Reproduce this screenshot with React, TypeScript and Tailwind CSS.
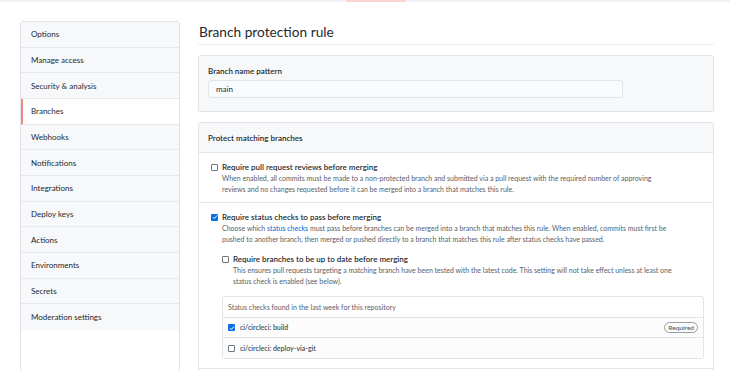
import React from "react";

const items = [
  "Options",
  "Manage access",
  "Security & analysis",
  "Branches",
  "Webhooks",
  "Notifications",
  "Integrations",
  "Deploy keys",
  "Actions",
  "Environments",
  "Secrets",
  "Moderation settings",
];

function Box({ checked }: { checked?: boolean }) {
  if (checked) {
    return (
      <span className="flex h-[7px] w-[7px] shrink-0 items-center justify-center rounded-[1px] bg-[#0b6fe0]">
        <svg viewBox="0 0 8 8" className="h-[6px] w-[6px]">
          <path d="M1.3 4.2 L3.2 6 L6.8 1.9" fill="none" stroke="white" strokeWidth="1.3" />
        </svg>
      </span>
    );
  }
  return <span className="h-[7px] w-[7px] shrink-0 rounded-[1px] border border-[#6e7681] bg-white" />;
}

export default function App() {
  return (
    <div
      className="h-[371px] w-[730px] overflow-hidden bg-white text-[#24292e]"
      style={{ fontFamily: "Lato, 'Noto Sans', sans-serif" }}
    >
      <div className="flex h-[2px] bg-[#f3f4f6]">
        <div className="w-[346px]" />
        <div className="w-[60px] bg-[#fcd3cf]" />
      </div>
      <div className="flex pl-[20px] pt-[19px]">
        <nav className="w-[160px] overflow-hidden rounded-[3px] border border-[#e1e4e8]">
          {items.map((it, i) => (
            <div
              key={it}
              className={
                "flex h-[25.67px] items-center px-[10px] text-[8px] " +
                (i < items.length - 1 ? "border-b border-[#e6e8eb] " : "") +
                (it === "Branches"
                  ? "border-l-2 border-l-[#f08c80] bg-white pl-[8px]"
                  : "bg-[#f6f8fa]")
              }
            >
              {it}
            </div>
          ))}
        </nav>
        <main className="ml-[18px] w-[516px]">
          <div className="flex h-[24px] items-center border-b border-[#eaecef] pl-[1px] pb-[1px] text-[13.7px] text-[#24292e]">
            Branch protection rule
          </div>
          <div className="mt-[10px] rounded-[3px] border border-[#e1e4e8] bg-[#f6f8fa] pl-[9px] pt-[9px] pb-[13px]">
            <div className="text-[8px] font-semibold leading-[12px]">Branch name pattern</div>
            <div className="mt-[3px] flex h-[18px] w-[415px] items-center rounded-[3px] border border-[#e1e4e8] bg-[#fafbfc] pl-[7px] text-[8px]">
              main
            </div>
          </div>
          <div className="mt-[10px] rounded-t-[3px] border-x border-t border-[#e1e4e8]">
            <div className="flex h-[30px] items-center border-b border-[#e1e4e8] bg-[#f6f8fa] pl-[9px] text-[8px] font-semibold">
              Protect matching branches
            </div>
            <div className="flex h-[50px] border-b border-[#e1e4e8] pl-[12px] pt-[8px]">
              <div className="flex h-[12px] items-center">
                <Box />
              </div>
              <div className="ml-[4px] whitespace-nowrap">
                <div className="text-[8px] font-semibold leading-[12px]">
                  Require pull request reviews before merging
                </div>
                <div className="text-[7px] leading-[11px] text-[#586069]">
                  When enabled, all commits must be made to a non-protected branch and submitted via a pull request with the required number of approving
                </div>
                <div className="text-[7px] leading-[11px] text-[#586069]">
                  reviews and no changes requested before it can be merged into a branch that matches this rule.
                </div>
              </div>
            </div>
            <div className="flex border-b border-[#e1e4e8] pl-[12px] pr-[9px] pt-[8px] pb-[9px]">
              <div className="flex h-[12px] items-center">
                <Box checked />
              </div>
              <div className="ml-[4px] flex-1 whitespace-nowrap">
                <div className="text-[8px] font-semibold leading-[12px]">
                  Require status checks to pass before merging
                </div>
                <div className="text-[7px] leading-[11px] text-[#586069]">
                  Choose which <span className="text-[#0366d6]">status checks</span> must pass before branches can be merged into a branch that matches this rule. When enabled, commits must first be
                </div>
                <div className="text-[7px] leading-[11px] text-[#586069]">
                  pushed to another branch, then merged or pushed directly to a branch that matches this rule after status checks have passed.
                </div>
                <div className="mt-[8px] flex">
                  <div className="flex h-[12px] items-center">
                    <Box />
                  </div>
                  <div className="ml-[4px]">
                    <div className="text-[8px] font-semibold leading-[12px]">
                      Require branches to be up to date before merging
                    </div>
                    <div className="text-[7px] leading-[11px] text-[#586069]">
                      This ensures pull requests targeting a matching branch have been tested with the latest code. This setting will not take effect unless at least one
                    </div>
                    <div className="text-[7px] leading-[11px] text-[#586069]">
                      status check is enabled (see below).
                    </div>
                  </div>
                </div>
                <div className="mt-[9px] rounded-[3px] border border-[#e1e4e8]">
                  <div className="flex h-[21px] items-center border-b border-[#e1e4e8] pl-[5px] text-[7px] text-[#586069]">
                    Status checks found in the last week for this repository
                  </div>
                  <div className="flex h-[20px] items-center border-b border-[#e1e4e8] bg-[#fcfcfd] pl-[5px] pr-[5px]">
                    <Box checked />
                    <span className="ml-[5px] flex-1 text-[7px] font-semibold text-[#444d56]">ci/circleci: build</span>
                    <span className="flex h-[11px] items-center rounded-full border border-[#959da5] px-[3px] text-[6.5px] font-semibold text-[#586069]">
                      Required
                    </span>
                  </div>
                  <div className="flex h-[20px] items-center bg-[#fcfcfd] pl-[5px]">
                    <Box />
                    <span className="ml-[5px] text-[7px] font-semibold text-[#444d56]">ci/circleci: deploy-via-git</span>
                  </div>
                </div>
              </div>
            </div>
            <div className="h-[20px]" />
          </div>
        </main>
      </div>
    </div>
  );
}
